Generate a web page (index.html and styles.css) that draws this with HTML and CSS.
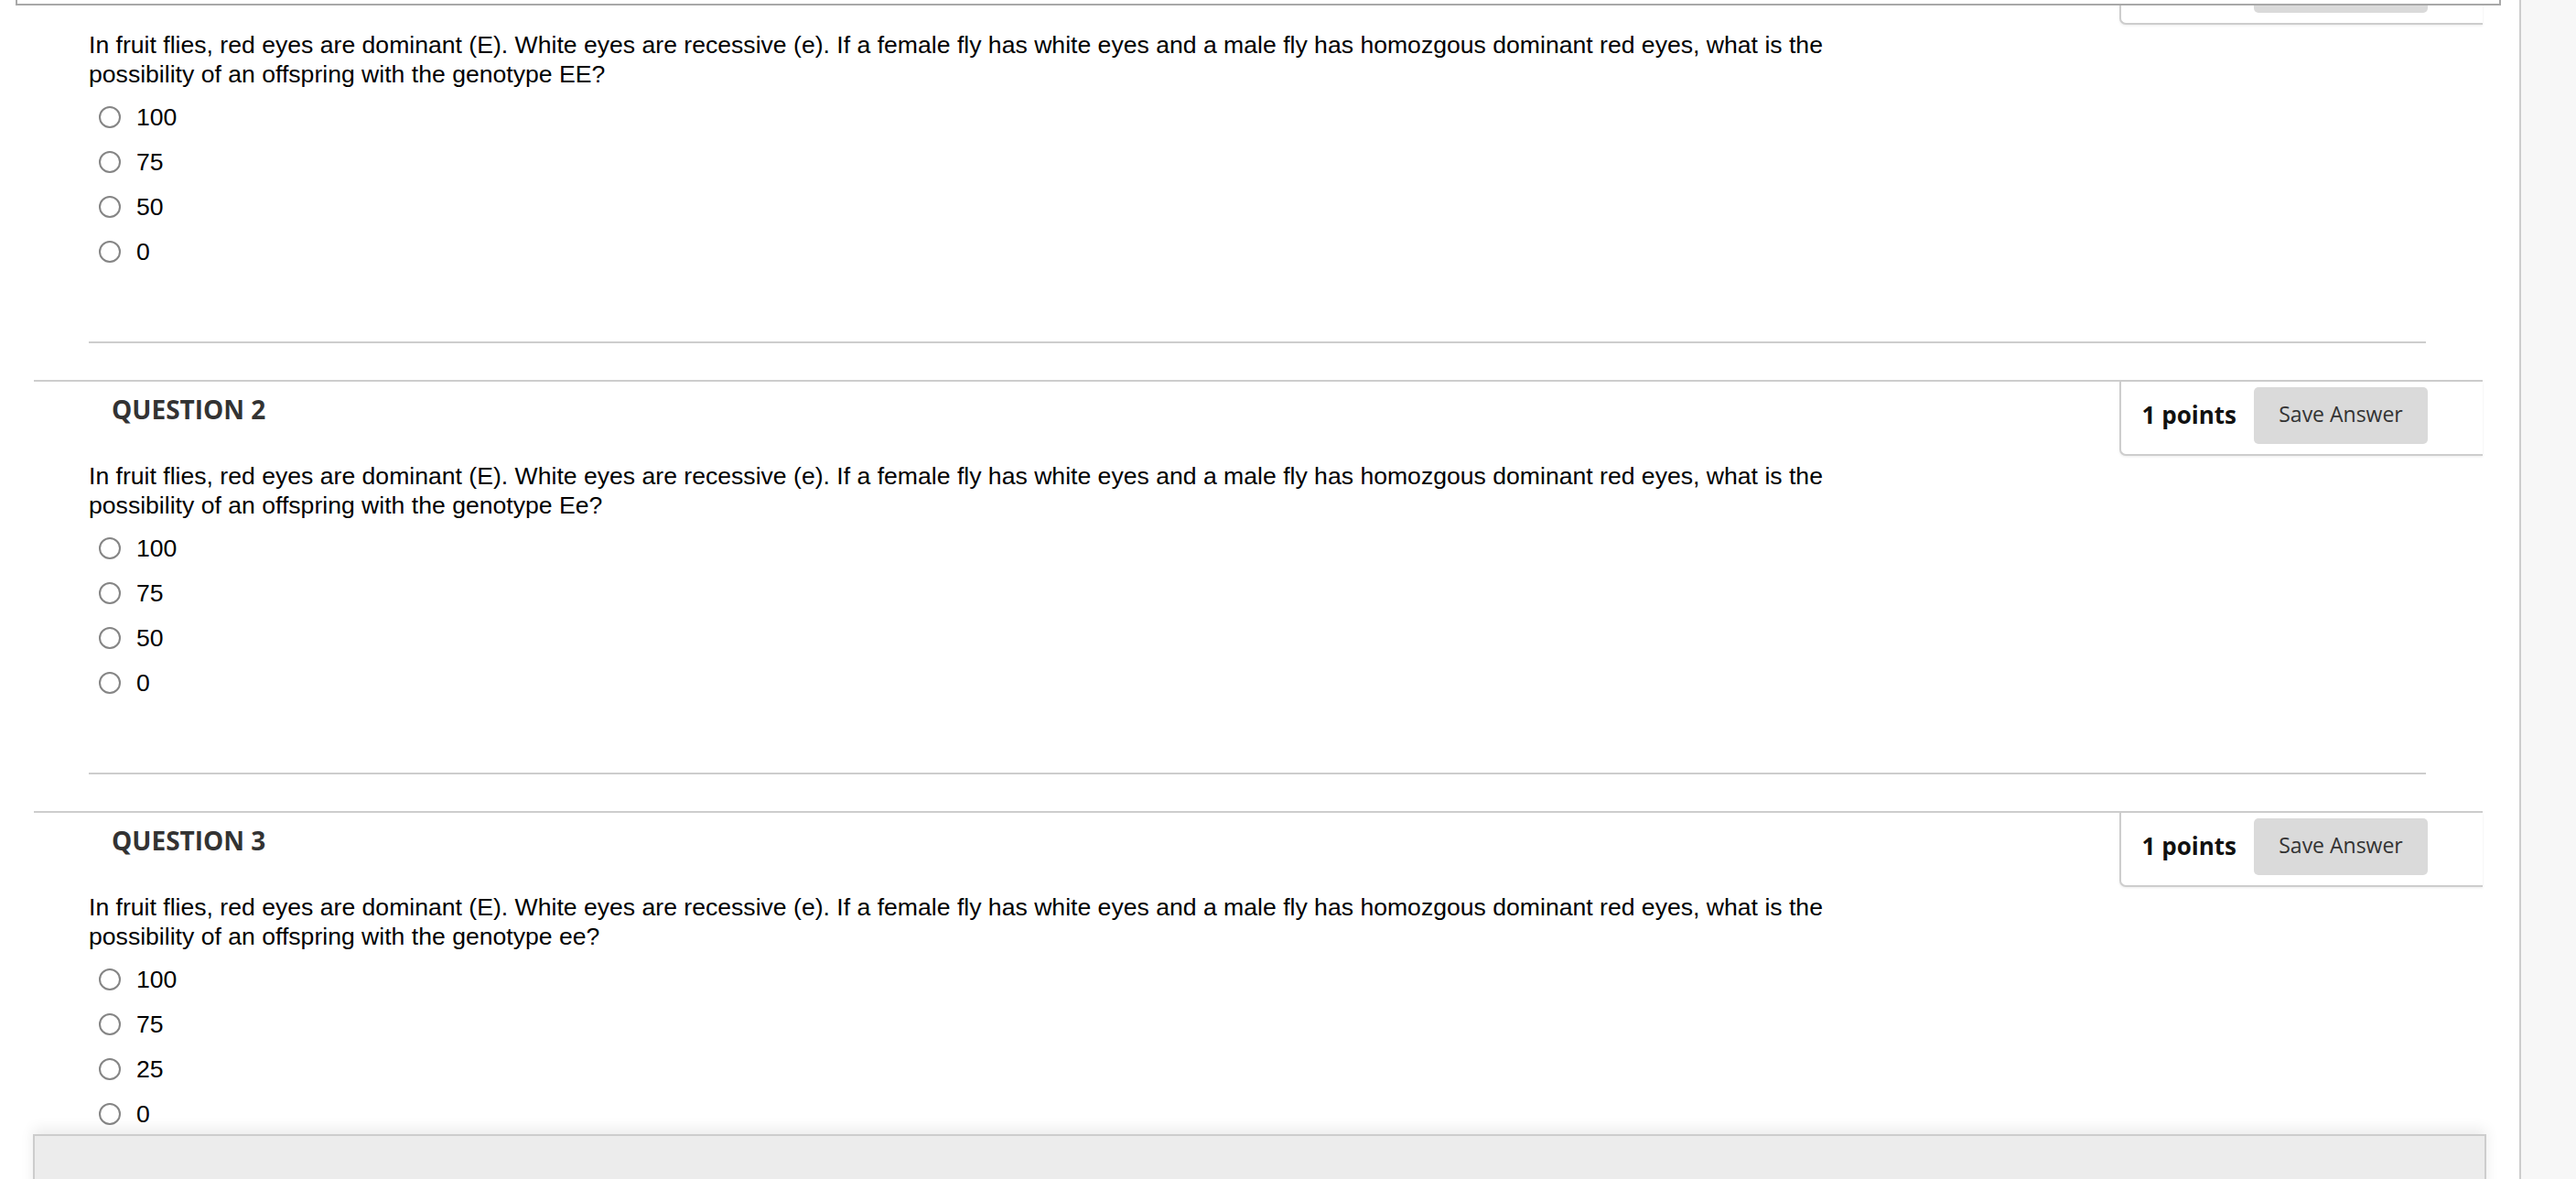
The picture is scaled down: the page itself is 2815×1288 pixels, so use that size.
FILE: index.html
```html
<!DOCTYPE html>
<html lang="en">
<head>
    <meta charset="UTF-8">
    <meta name="viewport" content="width=device-width, initial-scale=1.0">
    <title>Test</title>
    <link rel="stylesheet" href="styles.css">
</head>
<body>
    <div class="top-frame"></div>

    <div class="main">
        <div class="question">
            <div class="q-head">
                <h3 class="q-title">QUESTION 1</h3>
                <div class="q-points">
                    <span class="points">1 points</span>
                    <button type="button" class="btn-save">Save Answer</button>
                </div>
            </div>
            <div class="q-body">
                <p class="q-text">In fruit flies, red eyes are dominant (E). White eyes are recessive (e). If a female fly has white eyes and a male fly has homozgous dominant red eyes, what is the possibility of an offspring with the genotype EE?</p>
                <ul class="answers">
                    <li><input type="radio" name="q1" id="q1a"><label for="q1a">100</label></li>
                    <li><input type="radio" name="q1" id="q1b"><label for="q1b">75</label></li>
                    <li><input type="radio" name="q1" id="q1c"><label for="q1c">50</label></li>
                    <li><input type="radio" name="q1" id="q1d"><label for="q1d">0</label></li>
                </ul>
                <div class="q-divider"></div>
            </div>
        </div>

        <div class="question">
            <div class="q-head">
                <h3 class="q-title">QUESTION 2</h3>
                <div class="q-points">
                    <span class="points">1 points</span>
                    <button type="button" class="btn-save">Save Answer</button>
                </div>
            </div>
            <div class="q-body">
                <p class="q-text">In fruit flies, red eyes are dominant (E). White eyes are recessive (e). If a female fly has white eyes and a male fly has homozgous dominant red eyes, what is the possibility of an offspring with the genotype Ee?</p>
                <ul class="answers">
                    <li><input type="radio" name="q2" id="q2a"><label for="q2a">100</label></li>
                    <li><input type="radio" name="q2" id="q2b"><label for="q2b">75</label></li>
                    <li><input type="radio" name="q2" id="q2c"><label for="q2c">50</label></li>
                    <li><input type="radio" name="q2" id="q2d"><label for="q2d">0</label></li>
                </ul>
                <div class="q-divider"></div>
            </div>
        </div>

        <div class="question">
            <div class="q-head">
                <h3 class="q-title">QUESTION 3</h3>
                <div class="q-points">
                    <span class="points">1 points</span>
                    <button type="button" class="btn-save">Save Answer</button>
                </div>
            </div>
            <div class="q-body">
                <p class="q-text">In fruit flies, red eyes are dominant (E). White eyes are recessive (e). If a female fly has white eyes and a male fly has homozgous dominant red eyes, what is the possibility of an offspring with the genotype ee?</p>
                <ul class="answers">
                    <li><input type="radio" name="q3" id="q3a"><label for="q3a">100</label></li>
                    <li><input type="radio" name="q3" id="q3b"><label for="q3b">75</label></li>
                    <li><input type="radio" name="q3" id="q3c"><label for="q3c">25</label></li>
                    <li><input type="radio" name="q3" id="q3d"><label for="q3d">0</label></li>
                </ul>
                <div class="q-divider"></div>
            </div>
        </div>
    </div>

    <div class="bottom-bar"></div>
    <div class="scroll-track"></div>
</body>
</html>
```

FILE: styles.css
```css
body {
    margin: 0;
    padding: 0;
    background-color: #fff;
    font-family: "Liberation Sans", Arial, sans-serif;
    color: #000;
    overflow: hidden;
}

/* page is scrolled a bit, so the first question starts above the top */
.main {
    margin: -56px 0 0 37px;
    width: 2676px;
}

.question {
    border-top: 2px solid #cdcdcd;
    margin-bottom: 40px;
}

.q-head {
    display: flex;
    justify-content: space-between;
    align-items: flex-start;
}

.q-title {
    margin: 11px 0 0 85px;
    font-family: "Open Sans", sans-serif;
    font-size: 28px;
    line-height: 38px;
    font-weight: 700;
    color: #333;
}

.q-points {
    display: flex;
    align-items: center;
    gap: 19px;
    padding: 6px 60px 11px 23px;
    border: 2px solid #cdcdcd;
    border-top: none;
    border-right: none;
    border-bottom-left-radius: 7px;
    box-shadow: 0 1px 3px rgba(0, 0, 0, 0.08);
    background-color: #fff;
}

.points {
    font-family: "Open Sans", sans-serif;
    font-size: 26px;
    font-weight: 700;
    color: #111;
    margin-top: -3px;
}

.btn-save {
    width: 190px;
    height: 62px;
    padding: 0 0 4px;
    border: none;
    border-radius: 5px;
    background-color: #dadada;
    color: #333;
    font-family: "Open Sans", sans-serif;
    font-size: 23px;
    cursor: pointer;
}

.q-body {
    padding: 6px 62px 0 60px;
}

.q-text {
    margin: 0;
    max-width: 1980px;
    font-size: 26.6px;
    line-height: 32px;
}

.answers {
    list-style: none;
    margin: 6px 0 0;
    padding: 0;
}

.answers li {
    height: 49px;
    display: flex;
    align-items: center;
}

.answers input {
    appearance: none;
    -webkit-appearance: none;
    box-sizing: border-box;
    width: 24px;
    height: 24px;
    margin: 0 17px 0 11px;
    border: 2px solid #858585;
    border-radius: 50%;
    background-color: #fff;
}

.answers label {
    font-size: 26.6px;
    line-height: 32px;
}

.q-divider {
    margin-top: 74px;
    border-top: 2px solid #cdcdcd;
}

/* overlays */
.top-frame {
    position: fixed;
    top: -20px;
    left: 17px;
    width: 2712px;
    height: 22px;
    border: 2px solid #a8a8a8;
    background-color: #fff;
    z-index: 5;
}

.bottom-bar {
    position: fixed;
    top: 1239px;
    left: 36px;
    width: 2677px;
    height: 80px;
    border: 2px solid #cdcdcd;
    background-color: #ececec;
    box-shadow: 0 -6px 14px rgba(0, 0, 0, 0.08);
    z-index: 5;
}

.scroll-track {
    position: fixed;
    top: 0;
    right: 0;
    bottom: 0;
    width: 60px;
    border-left: 2px solid #cdcdcd;
    background-color: #f7f7f7;
    z-index: 6;
}
```
